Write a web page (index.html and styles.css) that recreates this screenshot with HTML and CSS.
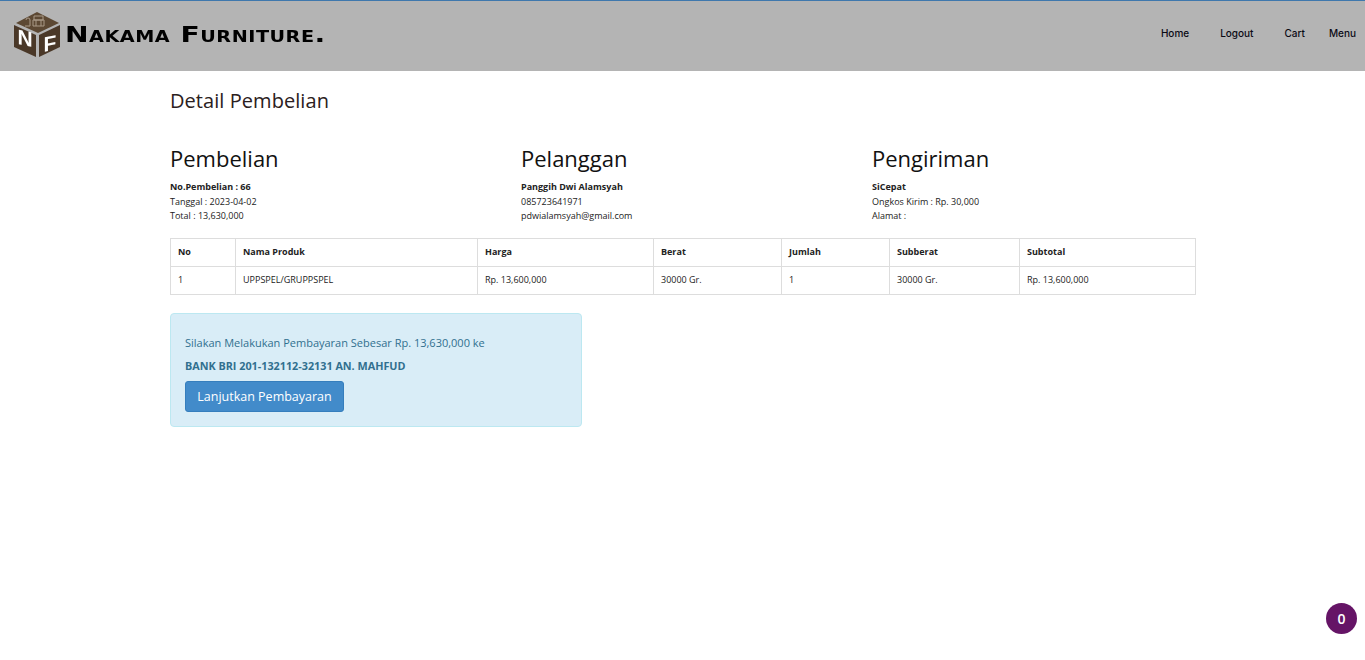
FILE: index.html
```html
<!DOCTYPE html>
<html>
<head>
  <title>Detail Pembelian</title>
  <link rel="stylesheet" href="styles.css">
</head>
<body>
  <nav class="navbar">
    <a class="brand" href="#">
      <svg class="brand-logo" viewBox="0 0 48 48" width="48" height="48" aria-hidden="true">
        <path d="M24 1 L46 12 L25 22 L3 12 Z" fill="#5c4833"/>
        <path d="M1 14 L23 24 L23 46 L1 36 Z" fill="#4a3828"/>
        <path d="M47 14 L26 24 L26 46 L47 36 Z" fill="#4a3828"/>
        <g fill="none" stroke="#a99a88" stroke-width="1">
          <path d="M21 5 H30 V9 H21 Z M20 9 H31 V15 H20 Z M23 9 V15 M28 9 V15"/>
          <path d="M13 9 A2 2 0 0 1 17 9 V15 M12 15 H17"/>
        </g>
        <text class="cube-letter" transform="matrix(1 .2 0 1 4.5 33)">N</text>
        <text class="cube-letter" transform="matrix(1 -.2 0 1 30.5 41)">F</text>
      </svg>
      <span class="brand-name">Nakama Furniture.</span>
    </a>
    <ul class="nav-links">
      <li><a href="#">Home</a></li>
      <li><a href="#">Logout</a></li>
      <li><a href="#">Cart</a></li>
      <li class="nav-menu"><a href="#">Menu</a></li>
    </ul>
  </nav>

  <div class="container">
    <h2 class="page-title">Detail Pembelian</h2>

    <div class="info-row">
      <div class="info-col">
        <h3>Pembelian</h3>
        <strong>No.Pembelian : 66</strong>
        <p>Tanggal : 2023-04-02</p>
        <p>Total : 13,630,000</p>
      </div>
      <div class="info-col">
        <h3>Pelanggan</h3>
        <strong>Panggih Dwi Alamsyah</strong>
        <p>085723641971</p>
        <p>pdwialamsyah@gmail.com</p>
      </div>
      <div class="info-col">
        <h3>Pengiriman</h3>
        <strong>SiCepat</strong>
        <p>Ongkos Kirim : Rp. 30,000</p>
        <p>Alamat :</p>
      </div>
    </div>

    <table class="detail-table">
      <thead>
        <tr>
          <th class="col-no">No</th>
          <th class="col-nama">Nama Produk</th>
          <th class="col-harga">Harga</th>
          <th class="col-berat">Berat</th>
          <th class="col-jumlah">Jumlah</th>
          <th class="col-subberat">Subberat</th>
          <th>Subtotal</th>
        </tr>
      </thead>
      <tbody>
        <tr>
          <td>1</td>
          <td>UPPSPEL/GRUPPSPEL</td>
          <td>Rp. 13,600,000</td>
          <td>30000 Gr.</td>
          <td>1</td>
          <td>30000 Gr.</td>
          <td>Rp. 13,600,000</td>
        </tr>
      </tbody>
    </table>

    <div class="alert-info">
      <p>Silakan Melakukan Pembayaran Sebesar Rp. 13,630,000 ke</p>
      <strong>BANK BRI 201-132112-32131 AN. MAHFUD</strong>
      <a class="btn-primary" href="#">Lanjutkan Pembayaran</a>
    </div>
  </div>

  <div class="cart-badge">0</div>
</body>
</html>
```

FILE: styles.css
```css
body {
  font-family: "Open Sans", sans-serif;
  font-size: 9px;
  line-height: 14px;
  margin: 0;
  background-color: #fff;
  color: #222;
}

a {
  text-decoration: none;
}

.navbar {
  height: 70px;
  background-color: #b4b4b4;
  border-top: 1px solid #3f78ad;
  display: flex;
  justify-content: space-between;
  align-items: center;
}

.brand {
  display: flex;
  align-items: center;
  margin: 0 0 2px 13px;
  gap: 4px;
  color: #000;
}

.brand-logo {
  display: block;
  filter: blur(0.3px);
}

.cube-letter {
  font-family: "Liberation Sans", sans-serif;
  font-weight: bold;
  font-size: 21px;
  fill: #fff;
}

.brand-name {
  font-family: "DejaVu Sans", sans-serif;
  font-weight: bold;
  font-variant: small-caps;
  font-size: 22px;
  letter-spacing: 0.4px;
  transform: scaleX(1.28);
  transform-origin: left center;
  filter: blur(0.3px);
}

.nav-links {
  list-style: none;
  display: flex;
  margin: 0 9px 6px 0;
  padding: 0;
  gap: 31px;
}

.nav-links .nav-menu {
  margin-left: -7px;
}

.nav-links a {
  font-family: Inter, sans-serif;
  font-size: 10px;
  font-weight: 500;
  color: #0a0a14;
}

.container {
  width: 1026px;
  margin-left: 170px;
}

.page-title {
  font-size: 20px;
  line-height: 28px;
  font-weight: 400;
  letter-spacing: 0.06px;
  color: #2b2020;
  margin: 16px 0 0;
}

.info-row {
  display: grid;
  grid-template-columns: repeat(3, 351px);
  margin-top: 28px;
}

.info-col h3 {
  font-size: 22px;
  line-height: 30px;
  font-weight: 400;
  color: #111;
  margin: 0 0 7px;
}

.info-col strong {
  display: block;
  margin-bottom: 1px;
}

.info-col p {
  margin: 0;
}

.detail-table {
  width: 1026px;
  table-layout: fixed;
  border-collapse: collapse;
  margin-top: 15px;
}

.detail-table th,
.detail-table td {
  height: 28px;
  padding: 0 7px 1px;
  box-sizing: border-box;
  border: 1px solid #ddd;
  text-align: left;
}

.col-no { width: 65px; }
.col-nama { width: 242px; }
.col-harga { width: 176px; }
.col-berat { width: 128px; }
.col-jumlah { width: 108px; }
.col-subberat { width: 130px; }

.alert-info {
  width: 382px;
  height: 84px;
  margin-top: 18px;
  padding: 14px;
  background-color: #d9edf7;
  border: 1px solid #bce8f1;
  border-radius: 4px;
  color: #31708f;
  font-size: 11px;
}

.alert-info p {
  margin: 7px 0 0;
  line-height: 16px;
}

.alert-info strong {
  display: block;
  margin-top: 7px;
  font-size: 10.8px;
  line-height: 16px;
}

.btn-primary {
  display: inline-block;
  box-sizing: border-box;
  width: 159px;
  height: 31px;
  margin-top: 7px;
  line-height: 29px;
  text-align: center;
  font-size: 12.5px;
  color: #fff;
  background-color: #428bca;
  border: 1px solid #357ebd;
  border-radius: 3px;
}

.cart-badge {
  position: fixed;
  right: 8px;
  bottom: 26px;
  width: 31px;
  height: 31px;
  border-radius: 50%;
  background-color: #651466;
  color: #fff;
  font-size: 14px;
  font-weight: 600;
  line-height: 31px;
  text-align: center;
}
```
